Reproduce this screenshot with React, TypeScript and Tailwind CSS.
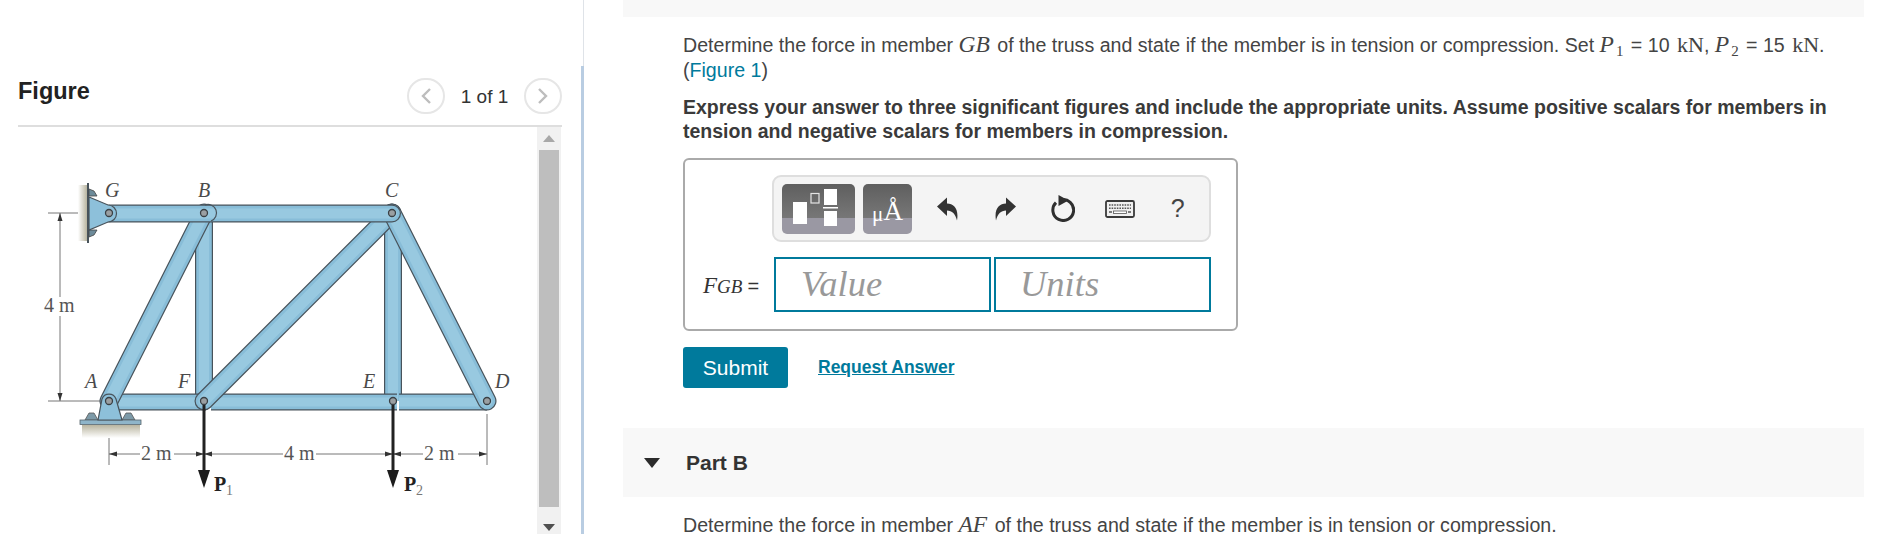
import React from "react";

function Member({ x1, y1, x2, y2, cap = "butt", w = 18 }: { x1: number; y1: number; x2: number; y2: number; cap?: "butt" | "round"; w?: number }) {
  return (
    <g strokeLinecap={cap}>
      <line x1={x1} y1={y1} x2={x2} y2={y2} stroke="#48535b" strokeWidth={w} />
      <line x1={x1} y1={y1} x2={x2} y2={y2} stroke="#88bdd8" strokeWidth={w - 2.4} />
      <line x1={x1} y1={y1} x2={x2} y2={y2} stroke="#98c9e0" strokeWidth={w - 8} />
    </g>
  );
}

function Pin({ x, y }: { x: number; y: number }) {
  return <circle cx={x} cy={y} r={3.5} fill="#9a9fa2" stroke="#3a4045" strokeWidth={1.3} />;
}

function Label({ x, y, t }: { x: number; y: number; t: string }) {
  return (
    <text x={x} y={y} fontSize={20} fontStyle="italic" fill="#4a4a4a" className="font-['Liberation_Serif',serif]">
      {t}
    </text>
  );
}

function Dim({ x, t }: { x: number; t: string }) {
  return (
    <text x={x} y={460} fontSize={20} fill="#555" className="font-['Liberation_Serif',serif]">
      {t}
    </text>
  );
}

function Truss() {
  return (
    <svg viewBox="18 127 519 407" className="w-[519px] h-[407px] shrink-0">
      <defs>
        <linearGradient id="wall" x1="0" x2="1" y1="0" y2="0">
          <stop offset="0" stopColor="#ffffff" />
          <stop offset="1" stopColor="#b9b5a0" />
        </linearGradient>
        <linearGradient id="floor" x1="0" x2="0" y1="0" y2="1">
          <stop offset="0" stopColor="#b9b5a0" />
          <stop offset="1" stopColor="#ffffff" />
        </linearGradient>
      </defs>

      {/* dimension lines */}
      <g stroke="#777" strokeWidth={1} fill="none">
        <line x1={48} y1={213} x2={84} y2={213} />
        <line x1={48} y1={401} x2={100} y2={401} />
        <line x1={60} y1={213} x2={60} y2={297} />
        <line x1={60} y1={316} x2={60} y2={401} />
        <line x1={109} y1={428} x2={109} y2={465} />
        <line x1={487} y1={414} x2={487} y2={465} />
        <line x1={109} y1={454} x2={140} y2={454} />
        <line x1={174} y1={454} x2={283} y2={454} />
        <line x1={316} y1={454} x2={423} y2={454} />
        <line x1={458} y1={454} x2={487} y2={454} />
      </g>
      <g fill="#333">
        <path d="M60 213l-2.5 8h5z" />
        <path d="M60 401l-2.5-8h5z" />
        <path d="M109 454l8-2.5v5z" />
        <path d="M204 454l-8-2.5v5z" />
        <path d="M204 454l8-2.5v5z" />
        <path d="M393 454l-8-2.5v5z" />
        <path d="M393 454l8-2.5v5z" />
        <path d="M487 454l-8-2.5v5z" />
      </g>

      {/* wall */}
      <rect x={78} y={185} width={9} height={56} fill="url(#wall)" />
      <rect x={87} y={183} width={2} height={60} fill="#48535b" />
      <path d="M89 189l5 2 3 5-8 0zM89 230l8 0-3 5-5 2z" fill="#6d8b9a" stroke="#444" strokeWidth={0.8} />

      {/* floor */}
      <rect x={82} y={425} width={58} height={13} fill="url(#floor)" />
      <path d="M85 420l4-7h5l4 7zM122 420l4-7h5l4 7z" fill="#7d9aa8" stroke="#555" strokeWidth={0.8} />
      <rect x={80} y={420} width={61} height={4.5} fill="#8fb5c9" stroke="#56646c" strokeWidth={0.8} />

      {/* verticals */}
      <Member x1={204} y1={213} x2={204} y2={401} />
      <Member x1={393} y1={213} x2={393} y2={401} />

      {/* bottom chord */}
      <Member x1={109} y1={402} x2={206} y2={402} w={17} />
      <Member x1={211} y1={402} x2={397} y2={402} w={17} />
      <Member x1={399} y1={402} x2={487} y2={402} w={17} />

      {/* slanted members */}
      <Member x1={109} y1={401} x2={204} y2={213} cap="round" w={19} />
      <Member x1={204} y1={401} x2={392} y2={213} cap="round" w={19} />
      <Member x1={392} y1={213} x2={487} y2={401} cap="round" w={19} />

      {/* top chord */}
      <Member x1={109} y1={213.5} x2={392} y2={213.5} cap="round" />
      <path d="M205 205a8.5 8.5 0 0 1 6 16" fill="none" stroke="#48535b" strokeWidth={1.2} />

      {/* brackets */}
      <path d="M89 197L108 205a8.5 8.5 0 0 1 0 17L89 230Z" fill="#8dc0da" stroke="#48535b" strokeWidth={1.2} />
      <path d="M98 420L102 399a7.5 7.5 0 0 1 14 0L122 420Z" fill="#8dc0da" stroke="#48535b" strokeWidth={1.2} />

      <Pin x={109} y={213} />
      <Pin x={204} y={213} />
      <Pin x={392} y={213} />
      <Pin x={109} y={401} />
      <Pin x={204} y={401} />
      <Pin x={393} y={401} />
      <Pin x={487} y={401} />

      {/* loads */}
      <g stroke="#222" strokeWidth={3}>
        <line x1={204} y1={405} x2={204} y2={474} />
        <line x1={393} y1={405} x2={393} y2={474} />
      </g>
      <path d="M198 470h12l-6 18zM387 470h12l-6 18z" fill="#1c1c1c" />

      <Label x={105} y={197} t="G" />
      <Label x={198} y={197} t="B" />
      <Label x={385} y={197} t="C" />
      <Label x={85} y={388} t="A" />
      <Label x={178} y={388} t="F" />
      <Label x={363} y={388} t="E" />
      <Label x={495} y={388} t="D" />

      <text x={44} y={312} fontSize={20} fill="#555" className="font-['Liberation_Serif',serif]">
        4 m
      </text>
      <Dim x={141} t="2 m" />
      <Dim x={284} t="4 m" />
      <Dim x={424} t="2 m" />

      <text x={214} y={491} fontSize={20} fontWeight={700} fill="#222" className="font-['Liberation_Serif',serif]">
        P
      </text>
      <text x={226} y={495} fontSize={14} fill="#777" className="font-['Liberation_Serif',serif]">
        1
      </text>
      <text x={404} y={491} fontSize={20} fontWeight={700} fill="#222" className="font-['Liberation_Serif',serif]">
        P
      </text>
      <text x={416} y={495} fontSize={14} fill="#777" className="font-['Liberation_Serif',serif]">
        2
      </text>
    </svg>
  );
}

function NavCircle({ dir }: { dir: "l" | "r" }) {
  return (
    <div className="w-[38px] h-[36px] rounded-full border-2 border-[#e6e6e6] flex items-center justify-center shrink-0">
      <svg width="12" height="18" viewBox="0 0 12 18" fill="none" stroke="#bdbdbd" strokeWidth="2.4">
        <path d={dir === "l" ? "M10 2L3 9l7 7" : "M2 2l7 7-7 7"} />
      </svg>
    </div>
  );
}

function Cell({ children }: { children: React.ReactNode }) {
  return <div className="w-[57.5px] h-full flex items-center justify-center shrink-0">{children}</div>;
}

function M({ children }: { children: React.ReactNode }) {
  return <span className="font-['Liberation_Serif',serif] italic text-[23.5px] leading-[0] mr-[2px]">{children}</span>;
}

function Sub({ children }: { children: React.ReactNode }) {
  return <sub className="font-['Liberation_Serif',serif] text-[15px] mr-[2px]">{children}</sub>;
}

function R({ children }: { children: React.ReactNode }) {
  return <span className="font-['Liberation_Serif',serif] text-[22px] leading-[0] ml-[2px]">{children}</span>;
}

const gradient = "bg-[linear-gradient(#5f5f5f_0%,#777777_68%,#9a98a3_68%,#9a98a3_100%)]";

export default function App() {
  return (
    <div className="w-[1879px] h-[534px] overflow-hidden bg-white flex font-['Liberation_Sans',Arial,sans-serif] text-[#444]">
      {/* left panel */}
      <div className="w-[581px] shrink-0 pl-[18px] pr-[19px] flex flex-col">
        <div className="h-[127px] shrink-0 border-b-2 border-[#dedede] pt-[76px] flex items-start">
          <div className="text-[23.5px] leading-[30px] font-bold text-[#222]">Figure</div>
          <div className="ml-auto flex items-center">
            <NavCircle dir="l" />
            <div className="w-[79px] text-center text-[19px] leading-[36px] text-[#333] pt-[3px]">1 of 1</div>
            <NavCircle dir="r" />
          </div>
        </div>
        <div className="flex h-[407px] w-[544px]">
          <Truss />
          <div className="w-[24px] bg-[#f1f1f1] px-[2px] flex flex-col items-center shrink-0">
            <div className="h-[23px] flex items-center justify-center">
              <svg width="12" height="7" viewBox="0 0 12 7"><path d="M6 0l6 7H0z" fill="#a8a8a8" /></svg>
            </div>
            <div className="w-[20px] h-[357px] bg-[#bebebe]" />
            <div className="flex-1 flex items-center justify-center pt-[14px]">
              <svg width="12" height="7" viewBox="0 0 12 7"><path d="M6 7L12 0H0z" fill="#505050" /></svg>
            </div>
          </div>
        </div>
      </div>

      {/* splitter */}
      <div className="w-[3px] shrink-0 flex flex-col">
        <div className="h-[66px] border-r border-[#dfe3e8]" />
        <div className="flex-1 bg-[#b9cde2]" />
      </div>

      {/* right panel */}
      <div className="ml-[39px] w-[1241px] shrink-0 flex flex-col">
        <div className="h-[17px] bg-[#f8f8f8] shrink-0" />
        <div className="pl-[60px]">
          <p className="mt-[16px] text-[19.6px] leading-[25px] whitespace-nowrap">
            Determine the force in member <M>GB</M> of the truss and state if the member is in tension or compression. Set{" "}
            <M>P</M><Sub>1</Sub> = 10 <R>kN</R>, <M>P</M><Sub>2</Sub> = 15 <R>kN</R>.
            <br />(<span className="text-[#007a9c]">Figure 1</span>)
          </p>
          <p className="mt-[12px] text-[19.5px] leading-[24px] font-bold text-[#3a3a3a] whitespace-nowrap">
            Express your answer to three significant figures and include the appropriate units. Assume positive scalars for members in
            <br />tension and negative scalars for members in compression.
          </p>

          <div className="mt-[15px] w-[555px] h-[173px] border-2 border-[#aaaaaa] rounded-[6px] pl-[15px] pt-[15px]">
            <div className="ml-[72px] w-[439px] h-[67px] border-2 border-[#dedede] rounded-[9px] bg-[#f4f4f4] flex items-center pl-[8px]">
              <div className={`w-[73px] h-[50px] rounded-[5px] shrink-0 ${gradient}`}>
                <svg width="73" height="50" viewBox="0 0 73 50">
                  <rect x="11" y="18" width="14" height="22" fill="#fff" />
                  <rect x="29" y="9.5" width="8" height="9.5" fill="none" stroke="#e4e4e4" strokeWidth="1.2" />
                  <rect x="42" y="5" width="13" height="16" fill="#fff" />
                  <rect x="41" y="23" width="15" height="1.5" fill="#fff" />
                  <rect x="42" y="27" width="13" height="15" fill="#fff" />
                </svg>
              </div>
              <div className={`ml-[8px] w-[49px] h-[50px] rounded-[5px] shrink-0 flex items-end justify-center pb-[9px] text-white font-['Liberation_Serif',serif] leading-none ${gradient}`}>
                <span className="text-[21px]">μ</span>
                <span className="text-[27px]">Å</span>
              </div>
              <div className="ml-[7px] h-full flex">
                <Cell>
                  <svg width="21" height="24" viewBox="0 0 21 24"><path d="M0 9.5L10 0.5V6.5C17 6.5 22 12 20 23.5C18.5 17 15 13.5 10 13.5V19Z" fill="#333" /></svg>
                </Cell>
                <Cell>
                  <svg width="21" height="24" viewBox="0 0 21 24"><path d="M21 9.5L11 0.5V6.5C4 6.5 -1 12 1 23.5C2.5 17 6 13.5 11 13.5V19Z" fill="#333" /></svg>
                </Cell>
                <Cell>
                  <svg width="24" height="27" viewBox="0 0 24 27" fill="none">
                    <path d="M5 7.6A10.4 10.4 0 1 0 10 4.9" stroke="#2f2f2f" strokeWidth="3" />
                    <path d="M7.5 0L17.5 5.5L7.5 11Z" fill="#2f2f2f" />
                  </svg>
                </Cell>
                <Cell>
                  <svg width="30" height="18" viewBox="0 0 30 18">
                    <rect x="1" y="1" width="28" height="16" rx="1.5" fill="#f0f0f0" stroke="#3a3a3a" strokeWidth="1.8" />
                    <path d="M4 5h22M4 8.2h22" stroke="#555" strokeWidth="1.6" strokeDasharray="1.6 1" />
                    <path d="M4 12h3M23 12h3" stroke="#555" strokeWidth="1.6" />
                    <rect x="8.5" y="11" width="13" height="2.4" fill="#fff" stroke="#555" strokeWidth="0.8" />
                  </svg>
                </Cell>
                <Cell>
                  <span className="text-[25px] text-[#444]">?</span>
                </Cell>
              </div>
            </div>

            <div className="mt-[15px] flex items-center">
              <div className="w-[74px] shrink-0 pl-[3px] text-[20px] text-[#333] whitespace-nowrap flex items-baseline pt-[3px]">
                <span className="font-['Liberation_Serif',serif] italic text-[23px]">F</span>
                <span className="font-['Liberation_Serif',serif] italic text-[19px]">GB</span>
                <span className="ml-[5px]">=</span>
              </div>
              <div className="w-[217px] h-[55px] border-2 border-[#007a9c] pl-[25px] font-['Liberation_Serif',serif] italic text-[36.5px] leading-[49px] text-[#999] shrink-0">Value</div>
              <div className="ml-[3px] w-[217px] h-[55px] border-2 border-[#007a9c] pl-[24px] font-['Liberation_Serif',serif] italic text-[36.5px] leading-[49px] text-[#999] shrink-0">Units</div>
            </div>
          </div>

          <div className="mt-[16px] flex items-center">
            <div className="w-[105px] h-[41px] rounded-[3px] bg-[#007a9c] text-white text-[21px] flex items-center justify-center">Submit</div>
            <div className="ml-[30px] text-[17.5px] font-bold text-[#007a9c] underline -mt-[1px]">Request Answer</div>
          </div>
        </div>

        <div className="mt-[40px] h-[69px] bg-[#f8f8f8] shrink-0 flex items-center">
          <svg width="16" height="10" viewBox="0 0 16 10" className="ml-[21px]"><path d="M0 0h16L8 10z" fill="#2b2b2b" /></svg>
          <div className="ml-[26px] pt-[1px] text-[21px] font-bold text-[#333]">Part B</div>
        </div>
        <p className="pl-[60px] mt-[19px] text-[19.6px] leading-[18px] whitespace-nowrap">
          Determine the force in member <M>AF</M> of the truss and state if the member is in tension or compression.
        </p>
      </div>
    </div>
  );
}
